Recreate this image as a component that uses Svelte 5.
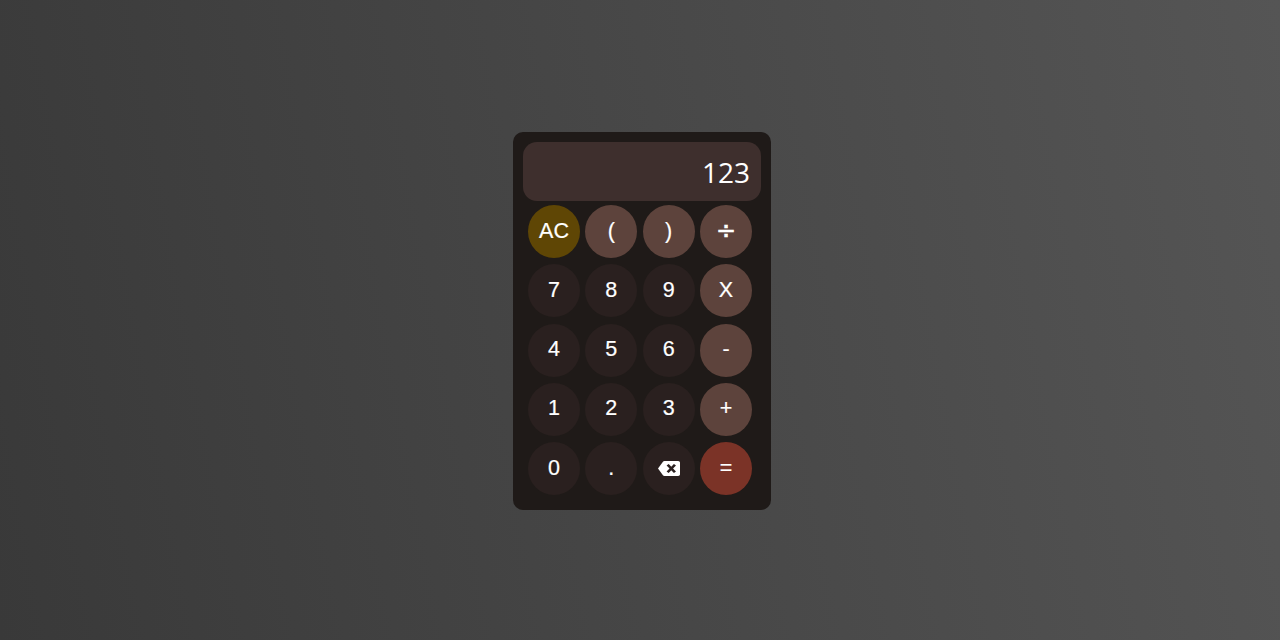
<script lang="ts">
	const keys = [
		{ label: 'AC', kind: 'clear' },
		{ label: '(', kind: 'op' },
		{ label: ')', kind: 'op' },
		{ label: '÷', kind: 'op divide' },
		{ label: '7', kind: 'num' },
		{ label: '8', kind: 'num' },
		{ label: '9', kind: 'num' },
		{ label: 'X', kind: 'op' },
		{ label: '4', kind: 'num' },
		{ label: '5', kind: 'num' },
		{ label: '6', kind: 'num' },
		{ label: '-', kind: 'op' },
		{ label: '1', kind: 'num' },
		{ label: '2', kind: 'num' },
		{ label: '3', kind: 'num' },
		{ label: '+', kind: 'op' },
		{ label: '0', kind: 'num' },
		{ label: '.', kind: 'num' },
		{ label: 'back', kind: 'num' },
		{ label: '=', kind: 'equals' }
	];
</script>

<div class="page">
	<div class="calc">
		<div class="display">123</div>
		<div class="keys">
			{#each keys as k}
				<button class={k.kind}>
					{#if k.label === 'back'}
						<svg width="22" height="15" viewBox="0 3 24 18" preserveAspectRatio="none" aria-hidden="true">
							<path fill="#fff" d="M22 3H7c-.7 0-1.2.35-1.6.88L0 12l5.400 8.110c.4.530.9.890 1.600.890h15c1.100 0 2-.9 2-2V5c0-1.100-.9-2-2-2z" />
							<path fill="none" stroke="#2a201f" stroke-width="3" d="M10.500 7.500l8 9M18.500 7.500l-8 9" />
						</svg>
					{:else}
						{k.label}
					{/if}
				</button>
			{/each}
		</div>
	</div>
</div>

<style>
	:global(body) {
		margin: 0;
	}
	.page {
		box-sizing: border-box;
		width: 100%;
		height: 640px;
		padding: 2px 0 0 4px;
		display: flex;
		align-items: center;
		justify-content: center;
		background: linear-gradient(80deg, #393939 0%, #555 100%);
	}
	.calc {
		width: 238px;
		height: 358px;
		padding: 10px;
		border-radius: 10px;
		background: #1f1a18;
		font-family: 'Liberation Sans', Arial, sans-serif;
	}
	.display {
		height: 59px;
		box-sizing: border-box;
		padding-right: 11px;
		border-radius: 14px;
		background: #3e2f2d;
		color: #fff;
		display: flex;
		align-items: center;
		justify-content: flex-end;
		font-family: 'Open Sans', sans-serif;
		font-size: 28px;
	}
	.keys {
		display: grid;
		grid-template-columns: repeat(4, 52px);
		grid-auto-rows: 53px;
		justify-content: space-between;
		row-gap: 6.300px;
		padding: 4px 9px 0 5px;
	}
	button {
		border: 0;
		padding: 0 0 1px;
		border-radius: 50%;
		color: #fff;
		font-family: inherit;
		font-size: 21.500px;
		-webkit-text-stroke: 0.2px #fff;
		display: flex;
		align-items: center;
		justify-content: center;
	}
	.num {
		background: #2a201f;
	}
	.op {
		background: #5d433c;
	}
	.divide {
		font-family: 'DejaVu Sans', sans-serif;
		font-size: 24px;
		-webkit-text-stroke: 0.5px #fff;
	}
	.clear {
		background: #5f4605;
	}
	.equals {
		background: #7b3327;
	}
</style>
